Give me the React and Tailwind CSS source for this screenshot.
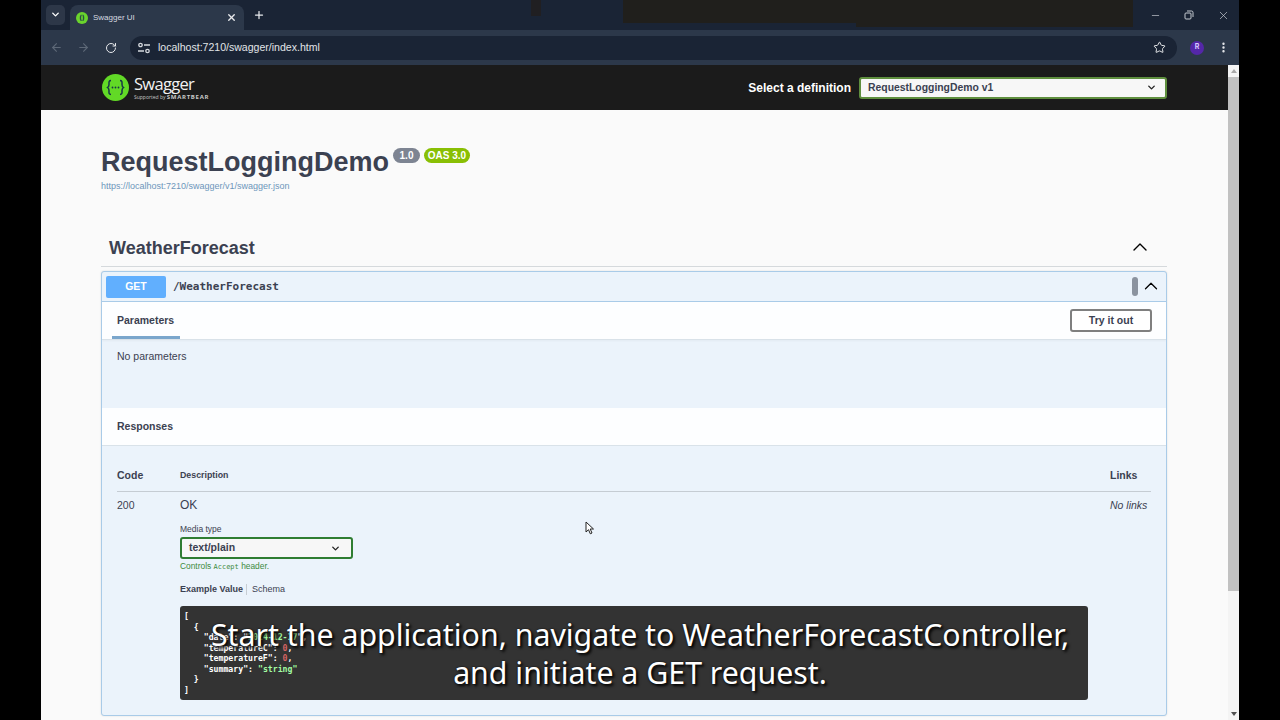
import React from "react";
import { ChevronDown, ChevronUp, X, Plus, ArrowLeft, ArrowRight, RotateCw, Star, Minus, MoreVertical } from "lucide-react";

const sans = "font-['Liberation_Sans',Arial,sans-serif]";
const mono = "font-['DejaVu_Sans_Mono','Liberation_Mono',monospace]";

function Browser() {
  return (
    <div className="shrink-0 font-['Inter',sans-serif]">
      <div className="relative h-[30px] bg-[#1a2435] flex items-center pl-[5px]">
        <div className="absolute left-[582px] top-0 w-[510px] h-[23px] bg-[#201f1c]" />
        <div className="absolute left-[815px] top-[23px] w-[277px] h-[4px] bg-[#201f1c]" />
        <div className="absolute left-[490px] top-0 w-[10px] h-[16px] bg-[#201f22]" />
        <div className="relative w-[19px] h-[20px] mt-[-1px] rounded-[5px] bg-[#2d3748] flex items-center justify-center text-white">
          <ChevronDown size={11} strokeWidth={3} />
        </div>
        <div className="relative ml-[5px] w-[174px] h-[25px] mt-[5px] rounded-t-[8px] bg-[#2c384a] flex items-center pl-[6px] pr-[7px]">
          <div className="w-[12px] h-[12px] rounded-full bg-[#6ad42d] flex items-center justify-center text-[7px] leading-none text-[#173647] font-bold">()</div>
          <span className="ml-[5px] text-[8px] text-[#d7dbe0] flex-1 font-['Liberation_Sans',sans-serif]">Swagger UI</span>
          <X size={11} strokeWidth={3} className="text-[#e8eaed]" />
        </div>
        <Plus size={12} strokeWidth={2.5} className="relative ml-[9px] text-[#e8eaed]" />
        <div className="flex-1" />
        <div className="relative flex items-center text-[#c6cbd2] pr-[9.5px] gap-[23px]">
          <Minus size={11} strokeWidth={1.5} />
          <svg width="10" height="10" viewBox="0 0 10 10" fill="none" stroke="currentColor" strokeWidth="1">
            <rect x="1" y="3" width="6" height="6" rx="1" />
            <path d="M3 1h4.5a1.5 1.5 0 0 1 1.5 1.5V7" />
          </svg>
          <X size={13} strokeWidth={1.3} />
        </div>
      </div>
      <div className="h-[35px] bg-[#2c384a] flex items-center pl-[9px] pr-[9px] text-[#e8eaed]">
        <ArrowLeft size={13} strokeWidth={2} className="text-[#5d6877]" />
        <ArrowRight size={13} strokeWidth={2} className="ml-[14px] text-[#5d6877]" />
        <RotateCw size={12} strokeWidth={2} className="ml-[15px]" />
        <div className="ml-[13px] h-[24px] flex-1 rounded-full bg-[#1a2435] flex items-center pl-[7px] pr-[11px]">
          <svg width="14" height="12" viewBox="0 0 14 12" fill="none" stroke="#d5d9de" strokeWidth="1.3">
            <circle cx="3.5" cy="3" r="1.7" />
            <path d="M7 3h6M1 9h6" />
            <circle cx="10.5" cy="9" r="1.7" />
          </svg>
          <span className="ml-[7px] text-[10.55px] text-[#e1e4e8] font-['Liberation_Sans',sans-serif]">localhost:7210/swagger/index.html</span>
          <div className="flex-1" />
          <Star size={13} strokeWidth={1.8} className="text-[#e8eaed]" />
        </div>
        <div className="ml-[13px] w-[14px] h-[14px] rounded-full bg-[#5427a8] flex items-center justify-center text-[7px] font-bold text-[#d8c8ff]">R</div>
        <MoreVertical size={13} strokeWidth={2.4} className="ml-[13px]" />
      </div>
    </div>
  );
}

function Topbar() {
  return (
    <div className="h-[45px] bg-[#1b1b1b] shrink-0 flex items-center pl-[61px] pr-[61px]">
      <svg width="27" height="27" viewBox="0 0 27 27" className="shrink-0">
        <circle cx="13.5" cy="13.5" r="13.5" fill="#62d926" />
        <path d="M9 6.5c-2.5 0-2 2-2 4s-1.500 3-1.500 3 1.500 1 1.500 3-.5 4 2 4M18 6.500c2.500 0 2 2 2 4s1.500 3 1.500 3-1.500 1-1.500 3 .5 4-2 4" fill="none" stroke="#173647" strokeWidth="1.500" />
        <circle cx="10.500" cy="13.500" r=".9" fill="#173647" />
        <circle cx="13.500" cy="13.500" r=".9" fill="#173647" />
        <circle cx="16.500" cy="13.500" r=".9" fill="#173647" />
      </svg>
      <div className="ml-[5px] mt-[-1px] flex flex-col text-white font-['Open_Sans',sans-serif]">
        <span className="text-[16.500px] leading-[20px] tracking-[-0.7px] font-normal text-[#f2f2f2]">Swagger</span>
        <span className="text-[5px] leading-[6px] text-[#c9c9c9] whitespace-nowrap">Supported by <span className="font-bold text-[6px] tracking-[0.7px]">SMARTBEAR</span></span>
      </div>
      <div className="flex-1" />
      <span className={`${sans} font-bold text-[12px] text-white mr-[8px]`}>Select a definition</span>
      <div className={`${sans} w-[308px] h-[22px] rounded-[3px] border-2 border-[#5f8f3e] bg-[#f7f7f7] flex items-center pl-[7px] pr-[8px] text-[10.4px] font-bold text-[#3b4151]`}>
        <span className="flex-1">RequestLoggingDemo v1</span>
        <ChevronDown size={11} strokeWidth={3} className="text-[#222]" />
      </div>
    </div>
  );
}

function Info() {
  return (
    <div className="pt-[36px] h-[121px]">
      <div className="flex items-start">
        <h1 className="text-[27px] leading-[32px] font-bold text-[#3b4151]">RequestLoggingDemo</h1>
        <span className="mt-[2px] ml-[4px] h-[15px] w-[27px] rounded-full bg-[#7d8492] text-white text-[10px] font-bold flex items-center justify-center">1.0</span>
        <span className="mt-[2px] ml-[4px] h-[15px] w-[46px] rounded-full bg-[#89bf04] text-white text-[10px] font-bold flex items-center justify-center">OAS 3.0</span>
      </div>
      <div className="mt-[3px] text-[9px] leading-[11px] text-[#6d96bb]">https://localhost:7210/swagger/v1/swagger.json</div>
    </div>
  );
}

function Operation() {
  return (
    <div className="mt-[4px] rounded-[3px] border border-[#a9cbe8] bg-[#ebf3fb] h-[445px] overflow-hidden shadow-[0_0_2px_rgba(0,0,0,0.12)]">
      <div className="h-[30px] border-b border-[#a9cbe8] flex items-center pl-[4px] pr-[4px]">
        <div className="w-[60px] h-[22px] rounded-[2px] bg-[#61affe] text-white text-[10.500px] font-bold flex items-center justify-center">GET</div>
        <span className={`${mono} ml-[7px] mt-[1px] text-[11px] font-semibold text-[#3b4151]`}>/WeatherForecast</span>
        <div className="flex-1" />
        <div className="w-[6px] h-[19px] rounded-full bg-[#8b939f]" />
        <ChevronUp size={22} strokeWidth={1.4} className="ml-[2px] mb-[2px] text-black" />
      </div>
      <div className="h-[38px] bg-[#fdfeff] border-b border-[#d9e2e9] flex items-center pl-[15px] pr-[14px] shadow-[0_1px_2px_rgba(0,0,0,0.04)]">
        <div className="relative h-full flex items-center">
          <span className="text-[10.500px] font-bold text-[#3b4151]">Parameters</span>
          <div className="absolute left-[-5px] bottom-0 w-[68px] h-[3px] bg-[#7aa6cc]" />
        </div>
        <div className="flex-1" />
        <div className="w-[82px] h-[23px] rounded-[3px] border-2 border-[#7f7f7f] bg-white text-[10.500px] font-bold text-[#3b4151] flex items-center justify-center">Try it out</div>
      </div>
      <div className="h-[68px] pl-[15px] pt-[10px] text-[10.500px] text-[#3b4151] leading-[13px]">No parameters</div>
      <div className="h-[38px] bg-[#fdfeff] border-b border-[#d9e2e9] flex items-center pl-[15px] text-[10.500px] font-bold text-[#3b4151]">Responses</div>
      <div className="px-[15px] pt-[15px]">
        <div className="flex items-start h-[31px] border-b border-[#c5ccd3] text-[#3b4151]">
          <span className="w-[63px] text-[10.500px] font-bold leading-[28px]">Code</span>
          <span className="flex-1 text-[8.800px] font-bold leading-[28px]">Description</span>
          <span className="w-[41px] text-[10.500px] font-bold leading-[28px]">Links</span>
        </div>
        <div className="flex items-start pt-[7px]">
          <span className="w-[63px] text-[10.500px] leading-[13px] text-[#3b4151]">200</span>
          <div className="flex-1 min-w-0">
            <div className="text-[12px] leading-[13px] text-[#3b4151]">OK</div>
            <div className="mt-[13px] text-[8.500px] leading-[9px] text-[#3b4151]">Media type</div>
            <div className="mt-[3px] w-[173px] h-[22px] rounded-[3px] border-2 border-[#2f7d32] bg-[#f7f7f7] flex items-center pl-[7px] pr-[10px] text-[10.500px] font-bold text-[#3b4151]">
              <span className="flex-1">text/plain</span>
              <ChevronDown size={11} strokeWidth={3} className="text-[#222]" />
            </div>
            <div className="mt-[3px] text-[8.400px] leading-[9px] text-[#3d8b40]">Controls <span className={`${mono} text-[7px]`}>Accept</span> header.</div>
            <div className="mt-[12px] flex items-center text-[9px] leading-[11px] text-[#3b4151]">
              <span className="font-bold pr-[3px] border-r border-[#c7cdd3]">Example Value</span>
              <span className="pl-[5px]">Schema</span>
            </div>
            <pre className={`${mono} mt-[11px] w-[908px] h-[94px] rounded-[3px] bg-[#333333] pl-[4px] pt-[5px] text-[8.200px] leading-[10.500px] font-semibold text-white overflow-hidden`}>
{"[\n  {\n    \"date\": \""}<span className="text-[#a2fca2]">2024-12-17</span>{"\",\n    \"temperatureC\": "}<span className="text-[#d36363]">0</span>{",\n    \"temperatureF\": "}<span className="text-[#d36363]">0</span>{",\n    \"summary\": "}<span className="text-[#a2fca2]">"string"</span>{"\n  }\n]"}
            </pre>
          </div>
          <span className="w-[41px] text-[10.500px] italic leading-[13px] text-[#3b4151]">No links</span>
        </div>
      </div>
    </div>
  );
}

function Scrollbar() {
  return (
    <div className="w-[11px] shrink-0 bg-[#f4f4f4] flex flex-col items-center">
      <div className="h-[12px] flex items-center justify-center">
        <div className="w-0 h-0 border-x-[3.500px] border-x-transparent border-b-[4px] border-b-[#a8a8a8]" />
      </div>
      <div className="w-full h-[514px] bg-[#c1c1c1]" />
      <div className="flex-1" />
      <div className="h-[12px] flex items-center justify-center">
        <div className="w-0 h-0 border-x-[3.500px] border-x-transparent border-t-[4px] border-t-[#505050]" />
      </div>
    </div>
  );
}

export default function App() {
  return (
    <div className="relative w-[1280px] h-[720px] bg-black overflow-hidden px-[41px]">
      <div className="h-full flex flex-col">
        <Browser />
        <div className="flex flex-1 min-h-0">
          <div className={`${sans} flex-1 min-w-0 flex flex-col bg-[#fafafa]`}>
            <Topbar />
            <div className="pl-[60px] pr-[61px]">
              <Info />
              <div className="h-[36px] border-b border-[#d5d9dc] flex items-center pl-[8px] pr-[15px]">
                <span className="text-[18px] font-bold text-[#3b4151] flex-1">WeatherForecast</span>
                <ChevronUp size={24} strokeWidth={1.4} className="mb-[3px] text-black" />
              </div>
              <Operation />
            </div>
          </div>
          <Scrollbar />
        </div>
      </div>
      <svg width="10" height="14" viewBox="0 0 10 14" className="absolute left-[585px] top-[521px]">
        <path d="M1 1v10l2.500-2.300 1.800 4.100 1.700-.8-1.800-4H8.500Z" fill="#fff" stroke="#222" strokeWidth="1" strokeLinejoin="round" />
      </svg>
      <div className="absolute left-0 right-0 top-[616px] text-center font-['Noto_Sans',sans-serif] text-[30.300px] leading-[38px] text-white [text-shadow:2px_2px_3px_rgba(0,0,0,1),0_0_2px_rgba(0,0,0,0.8)]">
        Start the application, navigate to WeatherForecastController,<br />and initiate a GET request.
      </div>
    </div>
  );
}
